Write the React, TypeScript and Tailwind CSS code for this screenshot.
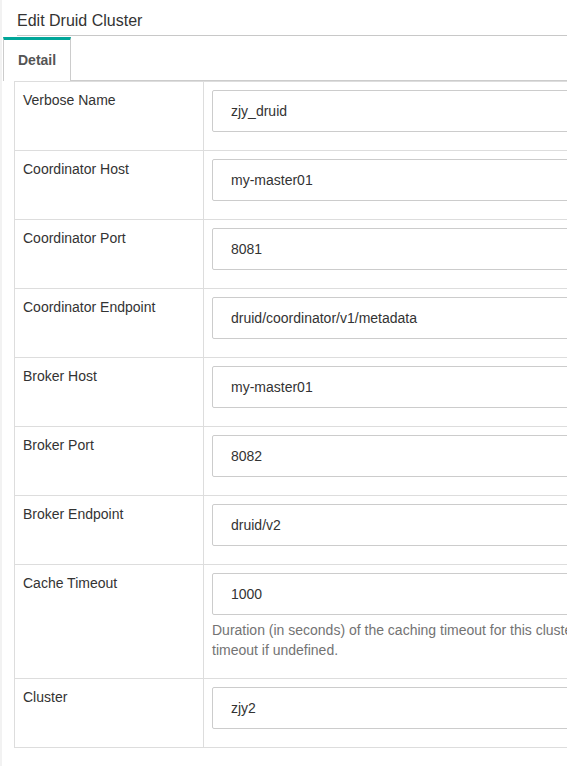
const fields: { label: string; value: string; help?: string[] }[] = [
  { label: 'Verbose Name', value: 'zjy_druid' },
  { label: 'Coordinator Host', value: 'my-master01' },
  { label: 'Coordinator Port', value: '8081' },
  { label: 'Coordinator Endpoint', value: 'druid/coordinator/v1/metadata' },
  { label: 'Broker Host', value: 'my-master01' },
  { label: 'Broker Port', value: '8082' },
  { label: 'Broker Endpoint', value: 'druid/v2' },
  {
    label: 'Cache Timeout',
    value: '1000',
    help: [
      'Duration (in seconds) of the caching timeout for this cluster. A timeout of 0 indicates that the cache never expires. Note this defaults to the global',
      'timeout if undefined.',
    ],
  },
  { label: 'Cluster', value: 'zjy2' },
];

export default function App() {
  return (
    <div className="flex min-h-[766px] w-full overflow-hidden bg-white font-['Liberation_Sans',Arial,sans-serif] text-[14px] text-[#333]">
      <div className="w-[2px] shrink-0 bg-[#f2f2f2]" />
      <div className="min-w-0 flex-1">
        <h2 className="ml-[15px] border-b border-[#c8c8c8] pt-[11px] pb-[5px] text-[16px] font-normal leading-[19px] text-[#333]">
          Edit Druid Cluster
        </h2>

        <div className="ml-[1px] mt-[1px] flex">
          <div className="border-x border-t-[3px] border-x-[#ccc] border-t-[#00a699] bg-white px-[14px] pt-[10px] pb-[11px] font-bold leading-[20px] text-[#555]">
            Detail
          </div>
          <div className="flex-1 border-b border-[#ccc]" />
        </div>

        <div className="ml-[12px] w-[1300px] border border-[#ddd]">
          {fields.map((f, i) => (
            <div key={f.label} className={`flex ${i > 0 ? 'border-t border-[#ddd]' : ''}`}>
              <div className="w-[188px] shrink-0 p-[8px] leading-[20px] text-[#333]">{f.label}</div>
              <div className="flex-1 border-l border-[#ddd] p-[8px]">
                <input
                  readOnly
                  defaultValue={f.value}
                  className="block h-[42px] w-full rounded-[2px] border border-[#ccc] bg-white px-[18px] text-[14px] text-[#333] outline-none"
                />
                {f.help ? (
                  <p className="mt-[5px] mb-[10px] whitespace-nowrap leading-[20px] text-[#737373]">
                    {f.help[0]}
                    <br />
                    {f.help[1]}
                  </p>
                ) : (
                  <div className="h-[10px]" />
                )}
              </div>
            </div>
          ))}
        </div>
      </div>
    </div>
  );
}
